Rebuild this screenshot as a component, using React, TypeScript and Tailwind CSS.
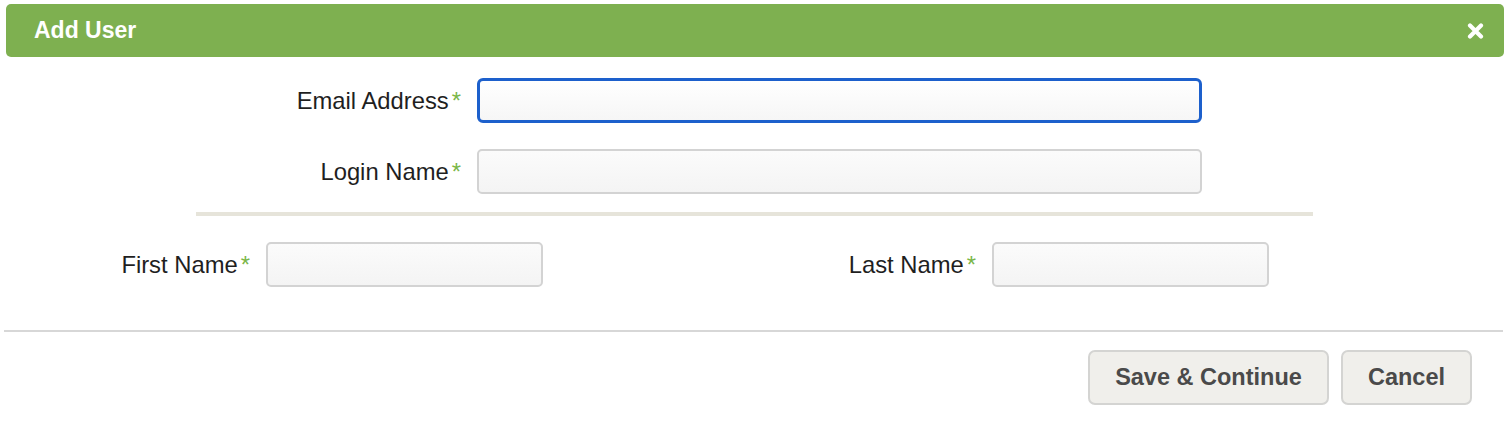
import React from "react";

function Req() {
  return <span className="text-[#7ab648] ml-[3px]">*</span>;
}

function Field({ w, focused }: { w: string; focused?: boolean }) {
  return (
    <div
      className={
        focused
          ? `${w} h-[45px] rounded-[6px] border-[3px] border-[#1d60cc] bg-gradient-to-b from-[#ffffff] to-[#f6f6f6]`
          : `${w} h-[45px] rounded-[5px] border-2 border-[#d3d3d3] bg-gradient-to-b from-[#fbfbfb] to-[#f4f4f4]`
      }
    />
  );
}

export default function App() {
  return (
    <div className="w-[1510px] h-[432px] bg-white font-['Liberation_Sans',Arial,sans-serif] text-[#1f1f1f] overflow-hidden">
      <div className="pt-[4px] px-[6px]">
        <div className="h-[53px] rounded-[5px] bg-[#7eb050] flex items-center justify-between pl-[28px] pr-[20px]">
          <span className="text-white font-bold text-[23px] leading-none">Add User</span>
          <svg width="17" height="16" viewBox="0 0 17 16" className="mt-[1px]">
            <path d="M3 2.5 L14 13.5 M14 2.5 L3 13.5" stroke="#ffffff" strokeWidth="4.2" strokeLinecap="round" />
          </svg>
        </div>
      </div>

      <div className="mt-[21px] flex items-center">
        <div className="w-[461px] text-right text-[23.8px] leading-none">
          Email Address<Req />
        </div>
        <div className="ml-[16px]">
          <Field w="w-[725px]" focused />
        </div>
      </div>

      <div className="mt-[26px] flex items-center">
        <div className="w-[461px] text-right text-[23.8px] leading-none">
          Login Name<Req />
        </div>
        <div className="ml-[16px]">
          <Field w="w-[725px]" />
        </div>
      </div>

      <div className="mt-[18px] ml-[196px] w-[1117px] h-[4px] bg-[#e6e4da]" />

      <div className="mt-[26px] flex items-center">
        <div className="w-[250px] text-right text-[23.8px] leading-none">
          First Name<Req />
        </div>
        <div className="ml-[16px]">
          <Field w="w-[277px]" />
        </div>
        <div className="w-[433px] text-right text-[23.8px] leading-none">
          Last Name<Req />
        </div>
        <div className="ml-[16px]">
          <Field w="w-[277px]" />
        </div>
      </div>

      <div className="mt-[43px] ml-[4px] w-[1499px] h-[2px] bg-[#d7d7d7]" />

      <div className="mt-[18px] flex justify-end gap-[12px] pr-[38px]">
        <button className="w-[241px] h-[55px] rounded-[7px] border-2 border-[#d4d4d2] bg-[#f0efeb] text-[#4a4a4a] font-bold text-[23.5px] leading-none">
          Save &amp; Continue
        </button>
        <button className="w-[131px] h-[55px] rounded-[7px] border-2 border-[#d4d4d2] bg-[#f0efeb] text-[#4a4a4a] font-bold text-[23.5px] leading-none">
          Cancel
        </button>
      </div>
    </div>
  );
}
